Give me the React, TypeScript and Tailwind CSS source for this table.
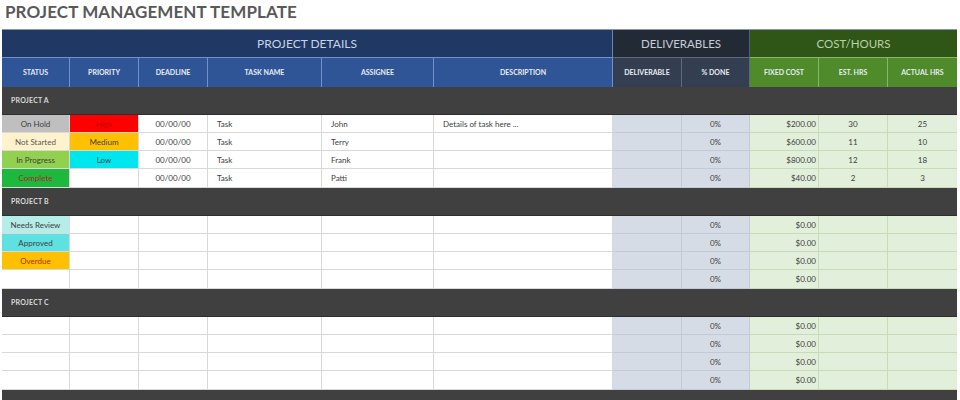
import React from 'react'

type Row = {
  status?: string
  statusCls?: string
  priority?: string
  priorityCls?: string
  deadline?: string
  task?: string
  assignee?: string
  description?: string
  done?: string
  cost?: string
  est?: string
  actual?: string
}

const COLS = 'grid grid-cols-[68px_69px_69px_114px_112px_179px_69px_68px_69px_69px_69px]'

const projects: { name: string; rows: Row[] }[] = [
  {
    name: 'PROJECT A',
    rows: [
      { status: 'On Hold', statusCls: 'bg-[#bfbfbf] text-[#404040]', priority: 'High', priorityCls: 'bg-[#ff0000] text-[#c00000]', deadline: '00/00/00', task: 'Task', assignee: 'John', description: 'Details of task here ...', done: '0%', cost: '$200.00', est: '30', actual: '25' },
      { status: 'Not Started', statusCls: 'bg-[#fff2cc] text-[#595959]', priority: 'Medium', priorityCls: 'bg-[#ffc000] text-[#9c3d00]', deadline: '00/00/00', task: 'Task', assignee: 'Terry', done: '0%', cost: '$600.00', est: '11', actual: '10' },
      { status: 'In Progress', statusCls: 'bg-[#92d050] text-[#375623]', priority: 'Low', priorityCls: 'bg-[#00e6ee] text-[#1f4e79]', deadline: '00/00/00', task: 'Task', assignee: 'Frank', done: '0%', cost: '$800.00', est: '12', actual: '18' },
      { status: 'Complete', statusCls: 'bg-[#1db83e] text-[#b8232b]', deadline: '00/00/00', task: 'Task', assignee: 'Patti', done: '0%', cost: '$40.00', est: '2', actual: '3' },
    ],
  },
  {
    name: 'PROJECT B',
    rows: [
      { status: 'Needs Review', statusCls: 'bg-[#b5ede8] text-[#5a6a78]', done: '0%', cost: '$0.00' },
      { status: 'Approved', statusCls: 'bg-[#5fe1e1] text-[#1f5a70]', done: '0%', cost: '$0.00' },
      { status: 'Overdue', statusCls: 'bg-[#ffc000] text-[#b02a1c]', done: '0%', cost: '$0.00' },
      { done: '0%', cost: '$0.00' },
    ],
  },
  {
    name: 'PROJECT C',
    rows: [
      { done: '0%', cost: '$0.00' },
      { done: '0%', cost: '$0.00' },
      { done: '0%', cost: '$0.00' },
      { done: '0%', cost: '$0.00' },
    ],
  },
]

const headers = [
  { label: 'STATUS', cls: 'bg-[#2f5597] border-[#7191c8]' },
  { label: 'PRIORITY', cls: 'bg-[#2f5597] border-[#7191c8]' },
  { label: 'DEADLINE', cls: 'bg-[#2f5597] border-[#7191c8]' },
  { label: 'TASK NAME', cls: 'bg-[#2f5597] border-[#7191c8]' },
  { label: 'ASSIGNEE', cls: 'bg-[#2f5597] border-[#7191c8]' },
  { label: 'DESCRIPTION', cls: 'bg-[#2f5597] border-[#7191c8]' },
  { label: 'DELIVERABLE', cls: 'bg-[#333f50] border-[#5f6b7d]' },
  { label: '% DONE', cls: 'bg-[#333f50] border-[#5f6b7d]' },
  { label: 'FIXED COST', cls: 'bg-[#4f8a2b] border-[#86b865]' },
  { label: 'EST. HRS', cls: 'bg-[#4f8a2b] border-[#86b865]' },
  { label: 'ACTUAL HRS', cls: 'bg-[#4f8a2b] border-[#86b865]' },
]

function DataRow({ row, last }: { row: Row; last: boolean }) {
  const h = last ? 'h-[19px]' : 'h-[18px]'
  const cell = `${h} flex items-center border-r border-b border-[#d9d9d9] text-[8px] text-[#404040]`
  return (
    <div className={COLS}>
      <div className={`${cell} justify-center ${row.statusCls ?? 'bg-white'}`}>{row.status}</div>
      <div className={`${cell} justify-center ${row.priorityCls ?? 'bg-white'}`}>{row.priority}</div>
      <div className={`${cell} justify-center bg-white`}>{row.deadline}</div>
      <div className={`${cell} pl-[9px] bg-white`}>{row.task}</div>
      <div className={`${cell} pl-[9px] bg-white`}>{row.assignee}</div>
      <div className={`${cell} pl-[9px] bg-white`}>{row.description}</div>
      <div className={`${h} border-r border-b border-[#c3cad5] bg-[#d6dce5]`} />
      <div className={`${h} flex items-center justify-center border-r border-b border-[#c3cad5] bg-[#d6dce5] text-[8px] text-[#404040]`}>{row.done}</div>
      <div className={`${h} flex items-center justify-end pr-[2px] border-r border-b border-[#c8dbb9] bg-[#e2efda] text-[8px] text-[#404040]`}>{row.cost}</div>
      <div className={`${h} flex items-center justify-center border-r border-b border-[#c8dbb9] bg-[#e2efda] text-[8px] text-[#404040]`}>{row.est}</div>
      <div className={`${h} flex items-center justify-center border-b border-[#c8dbb9] bg-[#e2efda] text-[8px] text-[#404040]`}>{row.actual}</div>
    </div>
  )
}

function ProjectBar({ name }: { name: string }) {
  return (
    <div className="h-[28px] bg-[#404040] border-b border-[#2e2e2e] flex items-center pl-[9px] text-[7px] font-bold text-[#d9d9d9] tracking-[0.2px]">
      {name}
    </div>
  )
}

export default function App() {
  return (
    <div className="w-[960px] h-[400px] overflow-hidden bg-white font-['Lato','Liberation_Sans',sans-serif]">
      <h1 className="h-[29px] pl-[5px] pt-[1px] text-[17px] leading-[22px] font-bold text-[#595959] tracking-[0.1px]">
        PROJECT MANAGEMENT TEMPLATE
      </h1>

      <div className="ml-[2px] w-[955px]">
        {/* group headers */}
        <div className="flex h-[28px] border-t border-[#8a96a8]">
          <div className="w-[611px] bg-[#1f3864] border-r border-[#7185a8] flex items-center justify-center text-[12px] text-[#c9d3e6]">
            PROJECT DETAILS
          </div>
          <div className="w-[137px] bg-[#222b35] border-r border-[#555f6b] flex items-center justify-center text-[11.5px] text-[#c9ced6]">
            DELIVERABLES
          </div>
          <div className="w-[207px] bg-[#2f5517] flex items-center justify-center text-[11.5px] text-[#b9d3a6]">
            COST/HOURS
          </div>
        </div>

        {/* column headers */}
        <div className={COLS}>
          {headers.map((h, i) => (
            <div
              key={h.label}
              className={`h-[30px] flex items-center justify-center border-t text-[7px] font-bold text-[#e8ecf3] ${i < headers.length - 1 ? 'border-r' : ''} ${h.cls}`}
            >
              {h.label}
            </div>
          ))}
        </div>

        {projects.map((p) => (
          <div key={p.name}>
            <ProjectBar name={p.name} />
            {p.rows.map((r, i) => (
              <DataRow key={i} row={r} last={i === p.rows.length - 1} />
            ))}
          </div>
        ))}
        <div className="h-[20px] bg-[#404040]" />
      </div>
    </div>
  )
}
